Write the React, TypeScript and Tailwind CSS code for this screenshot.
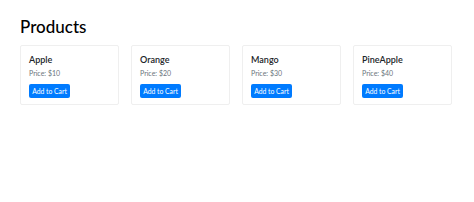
import React from 'react';

interface Product {
  name: string;
  price: number;
}

const products: Product[] = [
  { name: 'Apple', price: 10 },
  { name: 'Orange', price: 20 },
  { name: 'Mango', price: 30 },
  { name: 'PineApple', price: 40 },
];

const ProductCard: React.FC<{ product: Product }> = ({ product }) => {
  return (
    <div className="w-[99px] h-[60px] border border-[#efefef] rounded-[2px] bg-white px-2 pt-2 flex flex-col items-start">
      <h5 className="text-[9px] leading-[11px] font-semibold text-[#212529]">{product.name}</h5>
      <p className="mt-[4px] text-[7px] leading-[8px] text-[#6c757d]">Price: ${product.price}</p>
      <button className="mt-[7px] h-[14px] w-[41px] rounded-[2px] bg-[#007bff] text-white text-[6.8px] leading-[14px]">
        Add to Cart
      </button>
    </div>
  );
};

export default function App() {
  return (
    <div className="min-h-screen bg-white px-5 pt-[17px]" style={{ fontFamily: 'Lato, "Noto Sans", sans-serif' }}>
      <h2 className="text-[17px] leading-[20px] font-medium text-black">Products</h2>
      <div className="mt-2 flex gap-3">
        {products.map(p => (
          <ProductCard key={p.name} product={p} />
        ))}
      </div>
    </div>
  );
}
